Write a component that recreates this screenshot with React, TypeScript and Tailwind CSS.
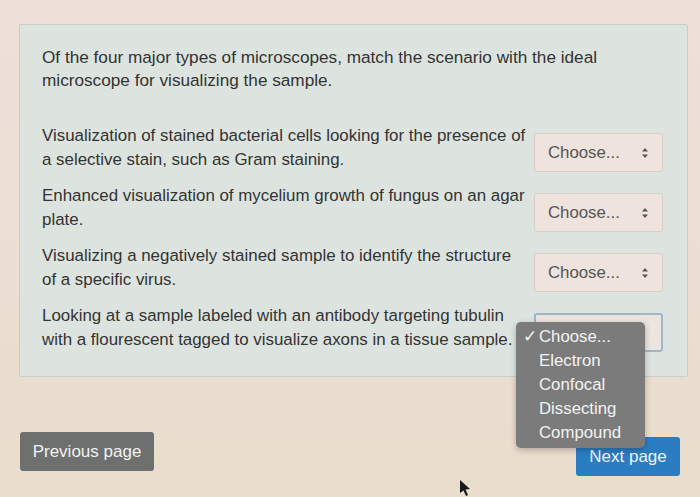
import React from "react";

const rows = [
  ["Visualization of stained bacterial cells looking for the presence of", "a selective stain, such as Gram staining."],
  ["Enhanced visualization of mycelium growth of fungus on an agar", "plate."],
  ["Visualizing a negatively stained sample to identify the structure", "of a specific virus."],
  ["Looking at a sample labeled with an antibody targeting tubulin", "with a flourescent tagged to visualize axons in a tissue sample."],
];

function Arrows() {
  return (
    <svg width="8" height="12" viewBox="0 0 8 12" className="text-[#555]">
      <path d="M4 1 L7 4.5 H1 Z" fill="currentColor" />
      <path d="M4 11 L7 7.5 H1 Z" fill="currentColor" />
    </svg>
  );
}

export default function App() {
  return (
    <div
      className="relative w-[700px] h-[497px] overflow-hidden bg-gradient-to-b from-[#eedfd9] to-[#e9ddcd] text-[#333]"
      style={{ fontFamily: '"Liberation Sans", Arial, sans-serif' }}
    >
      <div className="pt-[24px] pl-[19px] pr-[12px]">
        <div className="bg-[#dde4df] border border-[#c8cfca] rounded-[2px] pl-[22px] pr-[24px] pt-[21px] pb-[24px]">
          <p className="text-[17.2px] leading-[23px]">
            Of the four major types of microscopes, match the scenario with the ideal
            <br />
            microscope for visualizing the sample.
          </p>
          <div className="mt-[32px] flex flex-col gap-[12px]">
            {rows.map((r, i) => (
              <div key={i} className="flex items-start justify-between">
                <p className="text-[16.9px] leading-[24px]">
                  {r[0]}
                  <br />
                  {r[1]}
                </p>
                <div
                  className={
                    "mt-[9px] w-[129px] h-[39px] rounded-[3px] border flex items-center justify-between pl-[13px] pr-[13px] " +
                    (i === 3 ? "border-[#9fb6c9] border-2 bg-[#ebe4df]" : "border-[#d6cfca] bg-[#efe3dd]")
                  }
                >
                  {i !== 3 && (
                    <>
                      <span className="text-[16.8px] text-[#555]">Choose...</span>
                      <Arrows />
                    </>
                  )}
                </div>
              </div>
            ))}
          </div>
        </div>
        <div className="mt-[55px] flex justify-between items-start pl-[1px] pr-[8px]">
          <button className="w-[134px] h-[39px] rounded-[3px] bg-[#6d706f] text-[#f2f2f2] text-[17px]">
            Previous page
          </button>
          <button className="mt-[5px] w-[104px] h-[39px] rounded-[3px] bg-[#2b7dc2] text-[#eef3f8] text-[17px]">
            Next page
          </button>
        </div>
      </div>

      <div className="absolute left-[516px] top-[322px] w-[129px] h-[126px] rounded-[5px] bg-[#7b7b7b] shadow-[0_2px_6px_rgba(0,0,0,0.25)] pt-[3px] text-[16.8px] leading-[24px] text-[#f3f3f3]">
        <div className="flex">
          <span className="w-[23px] pl-[7px]">✓</span>
          <span>Choose...</span>
        </div>
        {["Electron", "Confocal", "Dissecting", "Compound"].map((t) => (
          <div key={t} className="pl-[23px]">{t}</div>
        ))}
      </div>

      <svg className="absolute left-[458px] top-[479px]" width="14" height="18" viewBox="0 0 14 18">
        <path d="M2 1 L12 10 L7.5 10.5 L10 16 L8 17 L5.5 11.5 L2 14 Z" fill="#1a1a1a" />
      </svg>
    </div>
  );
}
